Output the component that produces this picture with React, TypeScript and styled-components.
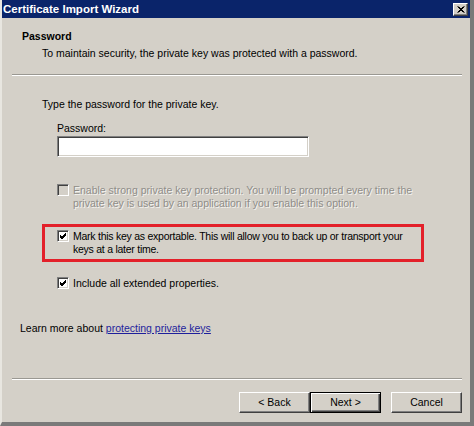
import React from "react";
import styled, { createGlobalStyle } from "styled-components";

const Global = createGlobalStyle`
  html, body { margin: 0; padding: 0; background: #d4d0c8; }
  body { font-family: "Liberation Sans", Arial, sans-serif; font-size: 10.5px; color: #000; }
  * { box-sizing: border-box; }
`;

const Window = styled.div`
  width: 474px;
  height: 426px;
  background: #d4d0c8;
  display: flex;
  flex-direction: column;
  border-left: 2px solid #e8e6e0;
  border-right: 4px solid #7a7a7a;
  border-bottom: 4px solid #7a7a7a;
  overflow: hidden;
`;

const TitleBar = styled.div`
  height: 18px;
  flex: none;
  background: #0a246a;
  display: flex;
  align-items: center;
  justify-content: space-between;
  padding: 0 2px 0 1px;
`;

const TitleText = styled.span`
  color: #fff;
  font-weight: bold;
  font-size: 11.5px;
  line-height: 13px;
`;

const CloseButton = styled.div`
  width: 15px;
  height: 13px;
  margin-top: 1px;
  background: #d4d0c8;
  border: 1px solid;
  border-color: #fff #404040 #404040 #fff;
  box-shadow: inset -1px -1px #808080;
  display: flex;
  align-items: center;
  justify-content: center;
`;

const Header = styled.div`
  padding: 12px 0 0 20px;
  display: flex;
  flex-direction: column;
`;

const HeaderTitle = styled.div`
  font-weight: bold;
  line-height: 13px;
`;

const HeaderSub = styled.div`
  line-height: 13px;
  margin: 4px 0 0 20px;
`;

const Separator = styled.div<{ $top: number }>`
  height: 2px;
  flex: none;
  margin: ${(p) => p.$top}px 8px 0 10px;
  border-top: 1px solid #9a9892;
  border-bottom: 1px solid #fff;
`;

const Body = styled.div`
  padding: 22px 0 0 40px;
  display: flex;
  flex-direction: column;
  align-items: flex-start;
`;

const Line = styled.div<{ $top?: number; $indent?: number }>`
  line-height: 13px;
  margin-top: ${(p) => p.$top ?? 0}px;
  margin-left: ${(p) => p.$indent ?? 0}px;
`;

const PasswordInput = styled.div`
  width: 252px;
  height: 21px;
  margin: 1px 0 0 15px;
  background: #fff;
  border: 1px solid;
  border-color: #808080 #fff #fff #808080;
  box-shadow: inset 1px 1px #404040, inset -1px -1px #d4d0c8;
`;

const CheckRow = styled.div<{ $top: number; $disabled?: boolean }>`
  display: flex;
  align-items: flex-start;
  gap: 4px;
  margin: ${(p) => p.$top}px 0 0 15px;
  color: ${(p) => (p.$disabled ? "#8f8d88" : "#000")};
  text-shadow: ${(p) => (p.$disabled ? "1px 1px 0 #f4f3f0" : "none")};
`;

const CheckBox = styled.div<{ $disabled?: boolean }>`
  width: 12px;
  height: 12px;
  flex: none;
  background: ${(p) => (p.$disabled ? "#d4d0c8" : "#fff")};
  border: 1px solid;
  border-color: #808080 #fff #fff #808080;
  box-shadow: inset 1px 1px #404040, inset -1px -1px #d4d0c8;
  display: flex;
  align-items: center;
  justify-content: center;
`;

const CheckText = styled.div<{ $tight?: boolean }>`
  line-height: 13px;
  width: 348px;
  letter-spacing: ${(p) => (p.$tight ? "-0.25px" : "0")};
`;

const Highlight = styled.div`
  width: 382px;
  height: 38px;
  margin: 14px 0 0 0;
  border: 3px solid #e3202a;
  padding: 3px 0 0 12px;
`;

const HighlightRow = styled.div`
  display: flex;
  align-items: flex-start;
  gap: 4px;
`;

const LearnMore = styled.div`
  line-height: 13px;
  margin: 32px 0 0 18px;
`;

const Link = styled.a`
  color: #1f1f9c;
  text-decoration: underline;
`;

const Spacer = styled.div`
  flex: 1;
`;

const ButtonRow = styled.div`
  display: flex;
  justify-content: flex-end;
  padding: 12px 8px 9px 0;
`;

const Button = styled.div<{ $default?: boolean; $gap?: number }>`
  width: 71px;
  height: 21px;
  margin-left: ${(p) => p.$gap ?? 0}px;
  display: flex;
  align-items: center;
  justify-content: center;
  line-height: 13px;
  background: #d4d0c8;
  border: 1px solid;
  border-color: ${(p) => (p.$default ? "#000" : "#fff #404040 #404040 #fff")};
  box-shadow: ${(p) =>
    p.$default
      ? "inset 1px 1px #fff, inset -1px -1px #404040, inset -2px -2px #808080"
      : "inset -1px -1px #808080"};
`;

const Check = () => (
  <svg width="7" height="7" viewBox="0 0 7 7">
    <path d="M0 2 L2 4 L6 0 M0 3 L2 5 L6 1 M0 4 L2 6 L6 2" stroke="#000" strokeWidth="1" fill="none" shapeRendering="crispEdges" />
  </svg>
);

const CloseX = () => (
  <svg width="8" height="7" viewBox="0 0 8 7">
    <path d="M0.5 0.5 L6.5 6.5 M1.5 0.5 L7.5 6.5 M6.5 0.5 L0.5 6.5 M7.5 0.5 L1.5 6.5" stroke="#000" strokeWidth="1" fill="none" />
  </svg>
);

export default function App() {
  return (
    <>
      <Global />
      <Window>
        <TitleBar>
          <TitleText>Certificate Import Wizard</TitleText>
          <CloseButton>
            <CloseX />
          </CloseButton>
        </TitleBar>
        <Header>
          <HeaderTitle>Password</HeaderTitle>
          <HeaderSub>To maintain security, the private key was protected with a password.</HeaderSub>
        </Header>
        <Separator $top={14} />
        <Body>
          <Line>Type the password for the private key.</Line>
          <Line $top={11} $indent={15}>Password:</Line>
          <PasswordInput />
          <CheckRow $top={27} $disabled>
            <CheckBox $disabled />
            <CheckText>
              Enable strong private key protection. You will be prompted every time the private key is used by an application if you enable this option.
            </CheckText>
          </CheckRow>
          <Highlight>
            <HighlightRow>
              <CheckBox>
                <Check />
              </CheckBox>
              <CheckText $tight>
                Mark this key as exportable. This will allow you to back up or transport your keys at a later time.
              </CheckText>
            </HighlightRow>
          </Highlight>
          <CheckRow $top={15}>
            <CheckBox>
              <Check />
            </CheckBox>
            <CheckText>Include all extended properties.</CheckText>
          </CheckRow>
        </Body>
        <LearnMore>
          Learn more about <Link href="#">protecting private keys</Link>
        </LearnMore>
        <Spacer />
        <Separator $top={0} />
        <ButtonRow>
          <Button>&lt; Back</Button>
          <Button $default>Next &gt;</Button>
          <Button $gap={10}>Cancel</Button>
        </ButtonRow>
      </Window>
    </>
  );
}
